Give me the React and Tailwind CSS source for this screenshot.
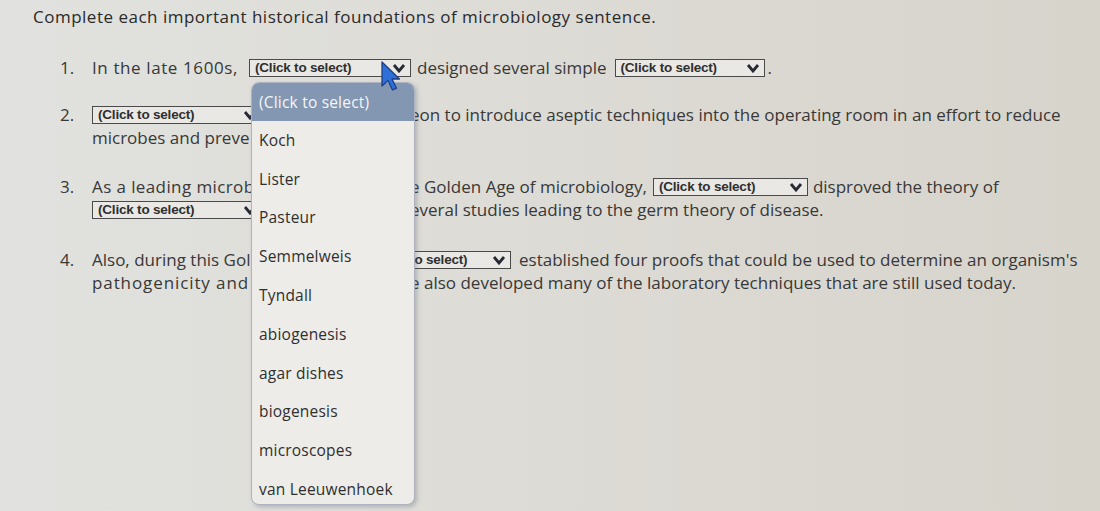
const options = [
  'Koch',
  'Lister',
  'Pasteur',
  'Semmelweis',
  'Tyndall',
  'abiogenesis',
  'agar dishes',
  'biogenesis',
  'microscopes',
  'van Leeuwenhoek',
];

const Select = ({ className = '' }) => (
  <span
    className={`inline-flex h-[18px] shrink-0 items-center justify-between border-[1.5px] border-[#4a4a4a] bg-[#e9e8e4] pl-[5px] pr-[4px] align-middle font-['Liberation_Sans',sans-serif] text-[13.5px] font-semibold tracking-[-0.2px] text-[#2f2f2f] ${className}`}
  >
    <span>(Click to select)</span>
    <svg width="14" height="10" viewBox="0 0 14 10" className="shrink-0">
      <path d="M2 2 L7 8 L12 2" fill="none" stroke="#262a35" strokeWidth="2.8" strokeLinejoin="miter" />
    </svg>
  </span>
);

// text cut off by the open dropdown
const Clip = ({ className = '', children }) => (
  <span className={`block shrink-0 overflow-hidden whitespace-nowrap ${className}`}>{children}</span>
);

const Cursor = () => (
  <svg width="22" height="32" viewBox="0 0 22 32" className="absolute left-[380px] top-[60px]">
    <path
      d="M2 2 L2 26 L8 20.5 L12.5 30 L16.5 28.2 L12 19 L19.5 19 Z"
      fill="#2f6fd8"
      stroke="#1c3f86"
      strokeWidth="1.3"
      strokeLinejoin="round"
    />
  </svg>
);

const Dropdown = () => (
  <div className="absolute left-[251px] top-[82px] h-[423px] w-[164px] overflow-hidden rounded-[8px] border border-[#aeb3bf] bg-[#edece8] shadow-[2px_2px_4px_rgba(90,100,120,0.35)] font-['Open_Sans',sans-serif] text-[15.5px] tracking-[0.2px] text-[#2f2f2f]">
    <div className="flex h-[38px] items-center bg-[#8397b2] pl-[7px] text-[#f4f5f7]">(Click to select)</div>
    {options.map((o) => (
      <div key={o} className="flex h-[38.8px] items-center pl-[7px]">
        {o}
      </div>
    ))}
  </div>
);

export default function App() {
  return (
    <div className="relative h-[511px] w-[1100px] overflow-hidden bg-gradient-to-r from-[#e1e2df] via-[#dddbd5] to-[#d7d4cc] font-['Open_Sans',sans-serif] text-[17px] leading-[23px] text-[#383838]">
      <div className="pl-[33px] pt-[5px] tracking-[0.5px] text-[#2a2a2a]">
        Complete each important historical foundations of microbiology sentence.
      </div>

      <div className="mt-[28px] flex flex-col pl-[60px]">
        {/* 1 */}
        <div className="flex">
          <span className="w-[32px] shrink-0">1.</span>
          <div className="flex items-center">
            <span className="w-[157px] shrink-0 tracking-[0.6px]">In the late 1600s,</span>
            <Select className="w-[162px]" />
            <span className="ml-[6px]">designed several simple</span>
            <Select className="ml-[8px] w-[150px]" />
            <span className="ml-[3px]">.</span>
          </div>
        </div>

        {/* 2 */}
        <div className="mt-[24px] flex">
          <span className="w-[32px] shrink-0">2.</span>
          <div className="flex flex-col">
            <div className="flex items-center">
              <Clip className="w-[318px]">
                <span className="flex items-center">
                  <Select className="w-[170px]" />
                </span>
              </Clip>
              <span className="whitespace-nowrap">eon to introduce aseptic techniques into the operating room in an effort to reduce</span>
            </div>
            <Clip className="w-[159px]">microbes and preve</Clip>
          </div>
        </div>

        {/* 3 */}
        <div className="mt-[26px] flex">
          <span className="w-[32px] shrink-0">3.</span>
          <div className="flex flex-col">
            <div className="flex items-center">
              <Clip className="w-[159px] tracking-[0.4px]">As a leading microbi</Clip>
              <span className="w-[159px] shrink-0" />
              <span className="whitespace-nowrap">e Golden Age of microbiology,</span>
              <Select className="ml-[6px] w-[155px]" />
              <span className="ml-[5px] whitespace-nowrap">disproved the theory of</span>
            </div>
            <div className="flex items-center">
              <Clip className="w-[318px]">
                <span className="flex items-center">
                  <Select className="w-[170px]" />
                </span>
              </Clip>
              <span className="whitespace-nowrap">everal studies leading to the germ theory of disease.</span>
            </div>
          </div>
        </div>

        {/* 4 */}
        <div className="mt-[27px] flex">
          <span className="w-[32px] shrink-0">4.</span>
          <div className="flex flex-col">
            <div className="flex items-center">
              <Clip className="w-[159px]">Also, during this Gol</Clip>
              <span className="w-[114px] shrink-0" />
              <Select className="w-[146px]" />
              <span className="ml-[8px] whitespace-nowrap">established four proofs that could be used to determine an organism's</span>
            </div>
            <div className="flex items-center">
              <Clip className="w-[159px] tracking-[0.9px]">pathogenicity and</Clip>
              <span className="w-[159px] shrink-0" />
              <span className="whitespace-nowrap">e also developed many of the laboratory techniques that are still used today.</span>
            </div>
          </div>
        </div>
      </div>

      <Dropdown />
      <Cursor />
    </div>
  );
}
